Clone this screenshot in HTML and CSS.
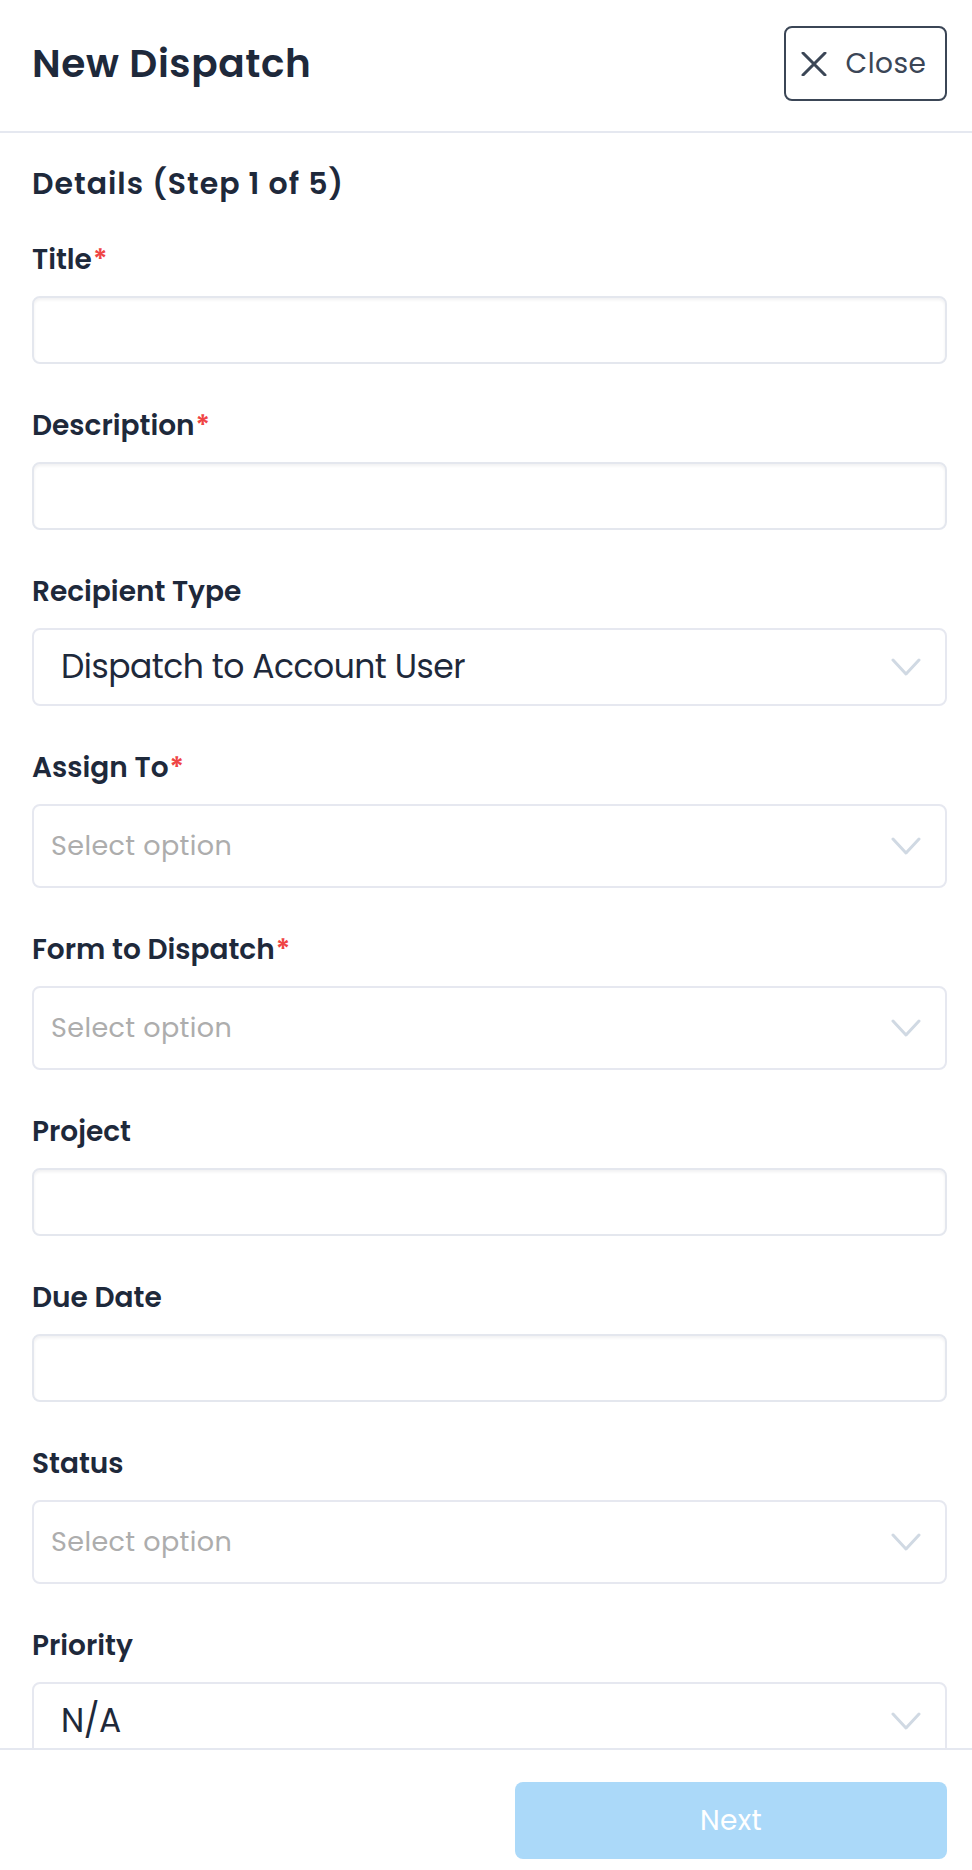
FILE: index.html
```html
<!DOCTYPE html>
<html lang="en">
<head>
<meta charset="utf-8">
<title>New Dispatch</title>
<link rel="stylesheet" href="styles.css">
</head>
<body>
<div class="page">
  <header class="header">
    <h1 class="header-title">New Dispatch</h1>
    <button class="close-btn" type="button">
      <svg class="close-icon" width="26" height="24" viewBox="0 0 26 24" aria-hidden="true">
        <path d="M2 1 L24 23 M24 1 L2 23" fill="none" stroke="currentColor" stroke-width="3" stroke-linecap="round"/>
      </svg>
      <span>Close</span>
    </button>
  </header>

  <main class="body">
    <h2 class="step-title">Details (Step 1 of 5)</h2>

    <div class="field">
      <label class="label">Title<span class="req">*</span></label>
      <div class="text-input"></div>
    </div>

    <div class="field">
      <label class="label">Description<span class="req">*</span></label>
      <div class="text-input"></div>
    </div>

    <div class="field">
      <label class="label">Recipient Type</label>
      <div class="native-select">
        <span class="value">Dispatch to Account User</span>
        <svg class="chevron" width="30" height="19" viewBox="0 0 30 19" aria-hidden="true"><path d="M2 2 L15 16 L28 2" fill="none" stroke="currentColor" stroke-width="3" stroke-linecap="round" stroke-linejoin="round"/></svg>
      </div>
    </div>

    <div class="field">
      <label class="label">Assign To<span class="req">*</span></label>
      <div class="select">
        <span class="placeholder">Select option</span>
        <svg class="chevron" width="30" height="19" viewBox="0 0 30 19" aria-hidden="true"><path d="M2 2 L15 16 L28 2" fill="none" stroke="currentColor" stroke-width="3" stroke-linecap="round" stroke-linejoin="round"/></svg>
      </div>
    </div>

    <div class="field">
      <label class="label">Form to Dispatch<span class="req">*</span></label>
      <div class="select">
        <span class="placeholder">Select option</span>
        <svg class="chevron" width="30" height="19" viewBox="0 0 30 19" aria-hidden="true"><path d="M2 2 L15 16 L28 2" fill="none" stroke="currentColor" stroke-width="3" stroke-linecap="round" stroke-linejoin="round"/></svg>
      </div>
    </div>

    <div class="field">
      <label class="label">Project</label>
      <div class="text-input"></div>
    </div>

    <div class="field">
      <label class="label">Due Date</label>
      <div class="text-input"></div>
    </div>

    <div class="field">
      <label class="label">Status</label>
      <div class="select">
        <span class="placeholder">Select option</span>
        <svg class="chevron" width="30" height="19" viewBox="0 0 30 19" aria-hidden="true"><path d="M2 2 L15 16 L28 2" fill="none" stroke="currentColor" stroke-width="3" stroke-linecap="round" stroke-linejoin="round"/></svg>
      </div>
    </div>

    <div class="field">
      <label class="label">Priority</label>
      <div class="native-select">
        <span class="value">N/A</span>
        <svg class="chevron" width="30" height="19" viewBox="0 0 30 19" aria-hidden="true"><path d="M2 2 L15 16 L28 2" fill="none" stroke="currentColor" stroke-width="3" stroke-linecap="round" stroke-linejoin="round"/></svg>
      </div>
    </div>
  </main>

  <footer class="footer">
    <button class="next-btn" type="button">Next</button>
  </footer>
</div>
</body>
</html>
```

FILE: styles.css
```css
* { box-sizing: border-box; }

html, body {
  margin: 0;
  padding: 0;
  background: #ffffff;
}

body {
  font-family: "Poppins", "Inter", "Noto Sans", sans-serif;
  color: #1e293b;
}

.page {
  width: 972px;
  height: 1870px;
  display: flex;
  flex-direction: column;
  overflow: hidden;
}

/* Header */
.header {
  flex: 0 0 auto;
  height: 133px;
  display: flex;
  align-items: center;
  justify-content: space-between;
  padding: 26px 25px 30px 32px;
  border-bottom: 2px solid #e5e8f0;
}

.header-title {
  margin: 0;
  font-size: 39px;
  font-weight: 600;
  line-height: 48px;
  letter-spacing: 0.6px;
  color: #1e293b;
}

.close-btn {
  width: 163px;
  height: 75px;
  display: flex;
  align-items: center;
  justify-content: center;
  gap: 19px;
  padding: 0 4px 0 0;
  border: 2px solid #3b4656;
  border-radius: 8px;
  background: #ffffff;
  color: #3b4656;
  font-family: inherit;
  font-size: 28px;
  font-weight: 400;
  letter-spacing: 0.5px;
  cursor: pointer;
}

.close-icon { display: block; flex: 0 0 auto; }

/* Body */
.body {
  flex: 1 1 auto;
  overflow: hidden;
  padding: 31px 25px 0 32px;
}

.step-title {
  margin: 0 0 36px 0;
  font-size: 30px;
  font-weight: 600;
  line-height: 40px;
  letter-spacing: 1px;
  color: #1e293b;
}

.field {
  margin-bottom: 42px;
}

.label {
  display: block;
  margin-bottom: 16px;
  font-size: 28px;
  font-weight: 600;
  line-height: 40px;
  letter-spacing: 0;
  color: #1e293b;
}

.req {
  color: #ef4444;
  margin-left: 1px;
}

.text-input {
  height: 68px;
  border: 2px solid #e4e7ee;
  border-radius: 8px;
  background: #ffffff;
  box-shadow: inset 0 2px 3px rgba(15, 23, 42, 0.06);
}

.native-select,
.select {
  display: flex;
  align-items: center;
  justify-content: space-between;
  border: 2px solid #e6e8f0;
  border-radius: 8px;
  background: #ffffff;
}

.native-select {
  height: 78px;
  padding: 0 24px 0 27px;
}

.select {
  height: 84px;
  padding: 0 24px 0 17px;
}

.value {
  font-size: 33px;
  font-weight: 400;
  letter-spacing: -0.5px;
  color: #1e293b;
}

.placeholder {
  font-size: 27px;
  font-weight: 400;
  letter-spacing: 0.4px;
  color: #adadad;
}

.chevron {
  display: block;
  flex: 0 0 auto;
  color: #d0d9e3;
}

/* Footer */
.footer {
  flex: 0 0 auto;
  height: 122px;
  display: flex;
  justify-content: flex-end;
  align-items: flex-start;
  padding: 32px 25px 0 32px;
  border-top: 2px solid #e5e8f0;
}

.next-btn {
  width: 432px;
  height: 77px;
  border: none;
  border-radius: 8px;
  background: #abd9f9;
  color: #ffffff;
  font-family: inherit;
  font-size: 28px;
  font-weight: 400;
  letter-spacing: 0.4px;
}
```
